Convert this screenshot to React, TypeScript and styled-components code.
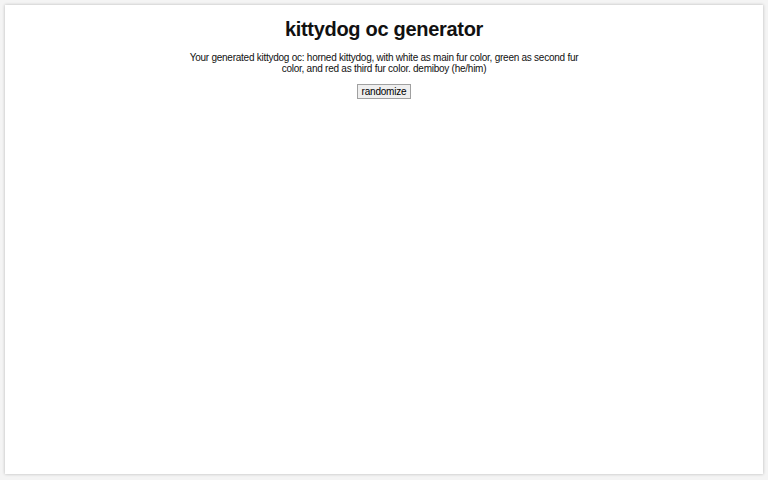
import { FC, useState } from "react";
import styled, { createGlobalStyle } from "styled-components";

const kinds = ["horned kittydog", "winged kittydog", "fluffy kittydog", "spotted kittydog"];
const colors = ["white", "green", "red", "blue", "black", "pink", "brown", "yellow"];
const genders = ["demiboy (he/him)", "demigirl (she/her)", "nonbinary (they/them)", "boy (he/him)", "girl (she/her)"];

const pick = (list: string[]) => list[Math.floor(Math.random() * list.length)];

const GlobalStyle = createGlobalStyle`
  html, body {
    margin: 0;
    padding: 0;
    background: #f4f4f4;
    font-family: "Liberation Sans", Arial, sans-serif;
  }
`;

const App: FC = () => {
  const [oc, setOc] = useState({
    kind: "horned kittydog",
    main: "white",
    second: "green",
    third: "red",
    gender: "demiboy (he/him)",
  });

  const randomize = () => {
    setOc({
      kind: pick(kinds),
      main: pick(colors),
      second: pick(colors),
      third: pick(colors),
      gender: pick(genders),
    });
  };

  return (
    <>
      <GlobalStyle />
      <Page>
        <Card>
          <Title>kittydog oc generator</Title>
          <Result>
            Your generated kittydog oc: {oc.kind}, with {oc.main} as main fur color, {oc.second} as second fur
            color, and {oc.third} as third fur color. {oc.gender}
          </Result>
          <RandomButton onClick={randomize}>randomize</RandomButton>
        </Card>
      </Page>
    </>
  );
};

export default App;

const Page = styled.div`
  padding: 5px 5px 6px 5px;
  height: 480px;
  box-sizing: border-box;
  display: flex;
`;

const Card = styled.div`
  flex: 1;
  background: #ffffff;
  box-shadow: 0 0 3px rgba(0, 0, 0, 0.25);
  display: flex;
  flex-direction: column;
  align-items: center;
  padding-top: 13px;
`;

const Title = styled.h1`
  margin: 0;
  font-size: 20px;
  letter-spacing: -0.3px;
  font-weight: bold;
  color: #111;
`;

const Result = styled.p`
  margin: 11px 0 0 0;
  max-width: 400px;
  font-size: 10px;
  line-height: 11px;
  letter-spacing: -0.25px;
  text-align: center;
  color: #111;
`;

const RandomButton = styled.button`
  margin-top: 10px;
  font-family: "Liberation Sans", Arial, sans-serif;
  font-size: 10px;
  letter-spacing: -0.2px;
  padding: 1px 4px;
  background: #efefef;
  border: 1px solid #a0a0a0;
  color: #000;
  cursor: pointer;
`;
